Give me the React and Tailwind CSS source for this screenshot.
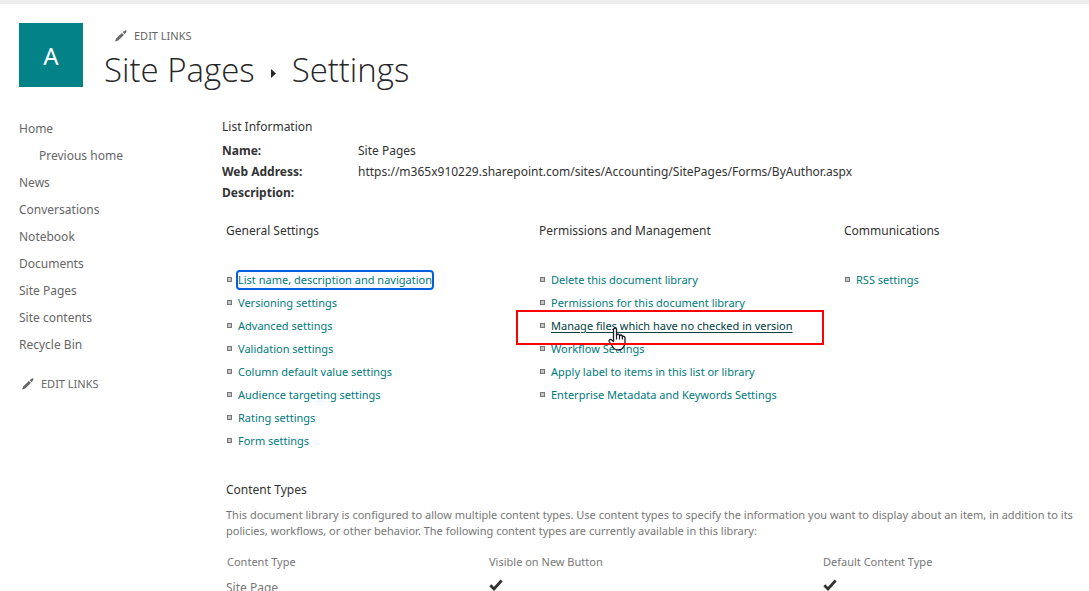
const navItems = [
  { label: 'Home' },
  { label: 'Previous home', nested: true },
  { label: 'News' },
  { label: 'Conversations' },
  { label: 'Notebook' },
  { label: 'Documents' },
  { label: 'Site Pages' },
  { label: 'Site contents' },
  { label: 'Recycle Bin' },
];

const groups = [
  {
    title: 'General Settings',
    links: [
      'List name, description and navigation',
      'Versioning settings',
      'Advanced settings',
      'Validation settings',
      'Column default value settings',
      'Audience targeting settings',
      'Rating settings',
      'Form settings',
    ],
  },
  {
    title: 'Permissions and Management',
    links: [
      'Delete this document library',
      'Permissions for this document library',
      'Manage files which have no checked in version',
      'Workflow Settings',
      'Apply label to items in this list or library',
      'Enterprise Metadata and Keywords Settings',
    ],
  },
  { title: 'Communications', links: ['RSS settings'] },
];

const FOCUSED = 'List name, description and navigation';
const HOVERED = 'Manage files which have no checked in version';

function Pencil() {
  return (
    <svg className="h-3 w-3 shrink-0" viewBox="0 0 12 12" fill="#666" aria-hidden="true">
      <path d="M0 11.5 L1.2 8.6 L6.9 3 L8.9 4.9 L3.2 10.4 Z" />
      <path d="M7.7 2.2 L8.8 1.1 L9.3 1.2 Q9.8 0 10.8 0.2 Q11.7 0.6 11.4 1.7 Q11.2 2.3 10.6 2.6 L10.8 3 L9.7 4.1 Z" />
    </svg>
  );
}

function EditLinks() {
  return (
    <button type="button" className="flex h-5 items-center gap-[7px] text-[11px] text-[#666]">
      <Pencil />
      EDIT LINKS
    </button>
  );
}

function Bullet() {
  return (
    <svg className="h-[5px] w-[5px] shrink-0" viewBox="0 0 5 5" aria-hidden="true">
      <rect width="5" height="5" fill="#777" />
      <rect x="1" y="1" width="3" height="3" fill="#c4c4c4" />
    </svg>
  );
}

function Check() {
  return (
    <svg className="block h-3 w-[14px]" viewBox="0 0 14 12" role="img" aria-label="Yes">
      <path d="M1.3 6.3 L5 10 L12.6 1.5" fill="none" stroke="#333" strokeWidth="2.8" />
    </svg>
  );
}

function HandCursor() {
  return (
    <svg className="absolute top-[17px] left-[92px] h-6 w-[18px]" viewBox="0 0 18 24" aria-hidden="true">
      <path
        d="M5.5 14.5 V2.5 Q5.5 1 7 1 Q8.5 1 8.5 2.5 V8.5 Q9 7 10.3 7.2 Q11.5 7.4 11.5 9 Q12 7.8 13.2 8 Q14.4 8.3 14.4 9.8 Q15 9 16 9.3 Q17 9.7 17 11 V15 Q17 18 15.5 20 Q14 23 10.5 23 Q6.5 23 4.5 19.5 L1.3 14.8 Q0.6 13.5 1.7 12.7 Q2.8 12.2 3.7 13 Z"
        fill="#fff"
        stroke="#1a1a2a"
        strokeWidth="1.3"
        strokeLinejoin="round"
      />
      <path d="M8.5 8.5 V12.5 M11.5 9 V12.5 M14.4 9.8 V12.5" stroke="#1a1a2a" strokeWidth="1.2" />
    </svg>
  );
}

function SettingLink({ label }) {
  const focused = label === FOCUSED;
  const hovered = label === HOVERED;
  const tone = hovered
    ? 'text-[#004044] underline underline-offset-2'
    : 'text-[#007a7d]';
  const ring = focused ? 'rounded-xs outline-2 outline-[#0060df]' : '';
  return (
    <li className="relative flex h-[23px] items-center gap-[6px]">
      <Bullet />
      <a href="#" className={`text-[11px] leading-4 ${tone} ${ring}`}>
        {label}
      </a>
      {hovered && (
        <>
          <span className="pointer-events-none absolute -top-1 -left-6 z-20 h-[35px] w-[308px] border-2 border-[#ff0000]" />
          <span className="pointer-events-none absolute -top-1 -left-6 z-10">
            <HandCursor />
          </span>
        </>
      )}
    </li>
  );
}

export default function App() {
  return (
    <div className="h-screen overflow-hidden bg-white font-['Noto_Sans','Open_Sans',sans-serif] text-xs text-[#333]">
      <div className="h-1 bg-[#ededed]" />
      <header className="flex gap-[21px] pt-[19px] pl-[19px]">
        <a href="#" className="flex size-16 items-center justify-center bg-[#038387] pt-0.5 text-2xl text-white">
          A
        </a>
        <div>
          <div className="pt-[3px] pl-[11px]">
            <EditLinks />
          </div>
          <h1 className="flex items-center gap-4 font-['Open_Sans','Noto_Sans',sans-serif] text-[33px] leading-12 font-light text-[#262626]">
            <a href="#">Site Pages</a>
            <svg className="mt-[6px] h-[9px] w-[5px]" viewBox="0 0 5 9" aria-hidden="true">
              <path d="M0 0 L5 4.5 L0 9 Z" fill="#262626" />
            </svg>
            <span>Settings</span>
          </h1>
        </div>
      </header>

      <div className="flex pt-[21px] pl-[19px]">
        <nav className="w-[203px] shrink-0 text-[#666]">
          <ul>
            {navItems.map((item) => (
              <li key={item.label} className={item.nested ? 'h-[27px] pl-5' : 'h-[27px]'}>
                <a href="#" className="leading-[27px]">
                  {item.label}
                </a>
              </li>
            ))}
          </ul>
          <div className="pt-4 pl-[3px]">
            <EditLinks />
          </div>
        </nav>

        <main className="min-w-0 flex-1">
          <h2 className="pb-px leading-6">List Information</h2>
          <dl className="grid grid-cols-[136px_1fr] leading-[21px]">
            <dt className="font-bold">Name:</dt>
            <dd>Site Pages</dd>
            <dt className="font-bold">Web Address:</dt>
            <dd>https://m365x910229.sharepoint.com/sites/Accounting/SitePages/Forms/ByAuthor.aspx</dd>
            <dt className="font-bold">Description:</dt>
            <dd />
          </dl>

          <div className="grid grid-cols-[313fr_305fr_245fr] pt-4 pl-1">
            {groups.map((group) => (
              <section key={group.title}>
                <h2 className="leading-6">{group.title}</h2>
                <ul className="pt-[25px] pl-px">
                  {group.links.map((label) => (
                    <SettingLink key={label} label={label} />
                  ))}
                </ul>
              </section>
            ))}
          </div>

          <section className="pt-[26px] pl-1">
            <h2 className="leading-6">Content Types</h2>
            <p className="pt-[5px] text-[11px] leading-4 whitespace-nowrap text-[#777]">
              This document library is configured to allow multiple content types. Use content types to specify the information you want to display about an item, in addition to its
              <br />
              policies, workflows, or other behavior. The following content types are currently available in this library:
            </p>
            <table className="mt-[10px] w-full table-fixed text-left text-[#777]">
              <thead>
                <tr className="h-[26px] text-[11px]">
                  <th className="w-[262px] pl-px font-normal">Content Type</th>
                  <th className="w-[334px] pl-px font-normal">Visible on New Button</th>
                  <th className="pl-px font-normal">Default Content Type</th>
                </tr>
              </thead>
              <tbody>
                <tr className="h-[26px]">
                  <td>
                    <a href="#">Site Page</a>
                  </td>
                  <td className="pt-1 pl-px align-top">
                    <Check />
                  </td>
                  <td className="pt-1 pl-px align-top">
                    <Check />
                  </td>
                </tr>
              </tbody>
            </table>
          </section>
        </main>
      </div>
    </div>
  );
}
